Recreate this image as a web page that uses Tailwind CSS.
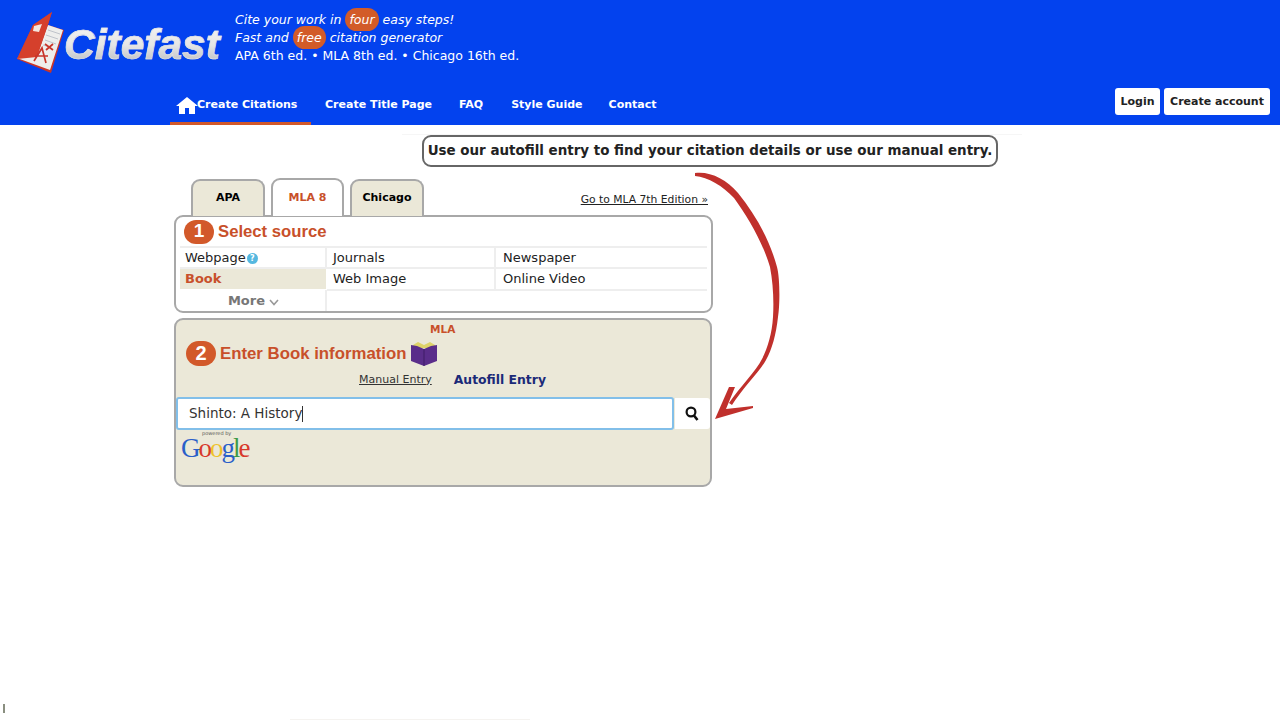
<!DOCTYPE html>
<html lang="en">
<head>
<meta charset="utf-8">
<script src="https://cdn.jsdelivr.net/npm/@tailwindcss/browser@4"></script>
<title>Citefast</title>
</head>
<body class="bg-white font-['DejaVu_Sans',sans-serif] overflow-hidden">
<div class="relative w-[1280px] h-[720px] overflow-hidden">
  <header class="h-[125px] bg-[#0342ee] flex flex-col">
    <div class="h-[83px] flex pl-[15px] pt-[9px]">
      <svg class="w-[50px] h-[64px] shrink-0" viewBox="0 0 50 64">
        <path d="M2 50 L18 16 L37 3 L33 16 L49 21 L36 64 Z" fill="#c9352a"/>
        <path d="M33 16 L48 21 L35 61 L2 49 L22 47 Z" fill="#eeeeec"/>
        <path d="M2 50 L18 16 L37 3 L32 18 L22 48 Z" fill="#d5402c"/>
        <path d="M19 17 L27 15 L24 23 L18 22 Z" fill="#f3e6df"/>
        <path d="M33 21 L45 25 M31 26 L43 30 M30 31 L41 35 M28 36 L35 38" stroke="#bfc3ca" stroke-width="1" fill="none"/>
        <path d="M19 52 L27 39 L31 54 M20 47 L33 47 M30 35 L38 41 M38 35 L31 41" stroke="#c9352a" stroke-width="1.7" fill="none"/>
      </svg>
      <div class="ml-[-1px] mt-[11px] w-[160px] h-[50px] text-[42.5px] leading-[50px] font-bold italic font-['Liberation_Sans',sans-serif] text-transparent bg-clip-text bg-gradient-to-b from-[#f6f6f6] via-[#e6e6e6] to-[#aeb2b8] [-webkit-text-stroke:0.6px_#e4e4e4] whitespace-nowrap">Citefast</div>
      <div class="ml-[11px] mt-[2px] text-[12.5px] leading-[18px] text-white whitespace-nowrap">
        <p class="italic">Cite your work in <span class="inline-block px-[4px] rounded-[12px] bg-[#d25b28] leading-[23px] h-[23px] -my-[3px]">four</span> easy steps!</p>
        <p class="italic">Fast and <span class="inline-block px-[4px] rounded-[12px] bg-[#d25b28] leading-[23px] h-[23px] -my-[3px]">free</span> citation generator</p>
        <p>APA 6th ed. • MLA 8th ed. • Chicago 16th ed.</p>
      </div>
    </div>
    <div class="flex-1 flex justify-between pl-[170px] pr-[10px]">
      <nav class="flex items-stretch text-[11px] font-bold text-white">
        <a class="flex items-center w-[141px] pl-[6px] pt-[5px] border-b-[3px] border-[#d2592a]">
          <svg class="w-[22px] h-[18px] shrink-0" viewBox="0 0 22 18"><path d="M11 1 L22 10 H19 V18 H13 V12 H9 V18 H3 V10 H0 Z" fill="#fff"/></svg>
          <span class="ml-[-1px]">Create Citations</span>
        </a>
        <a class="flex items-center ml-[14px] pt-[3px]">Create Title Page</a>
        <a class="flex items-center ml-[27px] pt-[3px]">FAQ</a>
        <a class="flex items-center ml-[28px] pt-[3px]">Style Guide</a>
        <a class="flex items-center ml-[26px] pt-[3px]">Contact</a>
      </nav>
      <div class="flex gap-[4px] mt-[5px] h-[27px] pt-0 text-[11px] font-bold text-[#222]">
        <a class="flex items-center justify-center w-[45px] pt-[1px] bg-white rounded-[3px]">Login</a>
        <a class="flex items-center justify-center w-[106px] pt-[1px] bg-white rounded-[3px]">Create account</a>
      </div>
    </div>
  </header>

  <main class="w-[539px] ml-[174px] pt-[54px]">
    <div class="flex items-end h-[37px] pl-[17px] relative z-10 -mb-px">
      <div class="w-[74px] h-[37px] flex items-center justify-center border-2 border-b-0 border-[#a8a8a8] rounded-t-[9px] bg-[#ebe8d8] text-[11px] font-bold text-black">APA</div>
      <div class="w-[73px] h-[38px] ml-[6px] flex items-center justify-center border-2 border-b-0 border-[#a8a8a8] rounded-t-[9px] bg-white text-[11px] font-bold text-[#c8502a]">MLA 8</div>
      <div class="w-[74px] h-[37px] ml-[6px] flex items-center justify-center border-2 border-b-0 border-[#a8a8a8] rounded-t-[9px] bg-[#ebe8d8] text-[11px] font-bold text-black">Chicago</div>
      <a class="ml-auto mr-[5px] mb-[9px] text-[10.75px] leading-[14px] text-[#222] underline">Go to MLA 7th Edition »</a>
    </div>

    <section class="w-[539px] h-[98px] border-2 border-[#a8a8a8] rounded-[9px] bg-white px-[4px]">
      <div class="h-[29px] flex items-center pl-[4px] font-['Liberation_Sans',sans-serif] font-bold text-[16.7px] text-[#c8502a]">
        <span class="w-[30px] h-[24px] rounded-[12px] bg-[#d2592a] text-white text-[19px] flex items-center justify-center">1</span>
        <span class="ml-[4px] mt-[1px]">Select source</span>
      </div>
      <div class="grid grid-cols-[147px_169px_211px] w-[527px] grid-rows-[21px_22px_20px] text-[13px] text-[#222] border-t-2 border-[#eeeeee]">
        <div class="flex items-center pl-[5px] border-r-2 border-b-2 border-[#eeeeee]">Webpage<span class="ml-[1px] mt-[2px] w-[11px] h-[11px] rounded-full bg-[#55b8e0] text-white text-[8px] leading-[11px] font-bold text-center">?</span></div>
        <div class="flex items-center pl-[6px] border-r-2 border-b-2 border-[#eeeeee]">Journals</div>
        <div class="flex items-center pl-[7px] border-b-2 border-[#eeeeee]">Newspaper</div>
        <div class="flex items-center pl-[5px] mr-[1px] bg-[#ebe8d8] font-bold text-[#c8502a] border-b-2 border-white shadow-[1px_0_0_#fff]">Book</div>
        <div class="flex items-center pl-[6px] border-r-2 border-b-2 border-[#eeeeee]">Web Image</div>
        <div class="flex items-center pl-[7px] border-b-2 border-[#eeeeee]">Online Video</div>
        <div class="flex items-center justify-center pl-[2px] border-r-2 border-[#eeeeee] font-bold text-[#777] -mt-[1px]">More
          <svg class="ml-[4px] mt-[3px] w-[10px] h-[7px]" viewBox="0 0 10 7"><path d="M1 1 L5 5.5 L9 1" stroke="#999" stroke-width="1.6" fill="none"/></svg>
        </div>
        <div></div>
        <div></div>
      </div>
    </section>

    <section class="w-[538px] h-[169px] mt-[5px] border-2 border-[#a8a8a8] rounded-[9px] bg-[#ebe8d8] flex flex-col">
      <p class="h-[18px] pt-[2px] pl-[254px] text-[10.5px] leading-[14px] font-bold text-[#c8502a]">MLA</p>
      <div class="h-[28px] mt-[1px] flex items-center pl-[10px] font-['Liberation_Sans',sans-serif] font-bold text-[16.8px] text-[#c8502a]">
        <span class="w-[30px] h-[25px] rounded-[13px] bg-[#d2592a] text-white text-[20px] flex items-center justify-center">2</span>
        <span class="ml-[4px] mt-[1px]">Enter Book information</span>
        <svg class="ml-[5px] w-[26px] h-[25px]" viewBox="0 0 26 25">
          <path d="M2 4 L7 1 L13 4 L19 1 L24 4 L24 7 L2 7 Z" fill="#ded36a"/>
          <path d="M0 4 L6 5 L13 8 L20 5 L26 4 V20 L13 25 L0 20 Z" fill="#5a2d8a"/>
          <path d="M13 8 V25" stroke="#3f1d66" stroke-width="1"/>
        </svg>
      </div>
      <div class="h-[20px] mt-[3px] flex items-center pl-[183px]">
        <a class="text-[11px] text-[#333] underline">Manual Entry</a>
        <span class="ml-[22px] text-[12.4px] font-bold text-[#1b2a78]">Autofill Entry</span>
      </div>
      <div class="flex mt-[7px]">
        <div class="w-[498px] h-[33px] bg-white border-2 border-[#82bfe9] rounded-[3px] flex items-center pl-[11px] text-[13.5px] text-[#333]">Shinto: A History<span class="w-px h-[16px] bg-[#333]"></span></div>
        <div class="w-[35px] h-[31px] mt-[1px] ml-px bg-white rounded-r-[3px] flex items-center justify-center pr-[2px]">
          <svg class="w-[14px] h-[15px]" viewBox="0 0 14 15"><circle cx="6" cy="6" r="4.4" fill="none" stroke="#111" stroke-width="2.2"/><path d="M9 9.5 L12.5 14" stroke="#111" stroke-width="2.6"/></svg>
        </div>
      </div>
      <div class="pl-[5px] flex flex-col w-[80px]">
        <span class="pl-[21px] text-[5px] leading-[6px] h-[6px] text-[#555]">powered by</span>
        <span class="font-['Liberation_Serif',serif] text-[27px] leading-[24px] tracking-[-2px] whitespace-nowrap"><span class="inline-block text-[#2a5fc9]">G</span><span class="inline-block text-[#d8392b]">o</span><span class="inline-block text-[#eec22b]">o</span><span class="inline-block text-[#2a5fc9]">g</span><span class="inline-block text-[#3d9a45]">l</span><span class="inline-block text-[#d8392b]">e</span></span>
      </div>
    </section>
  </main>

  <div class="absolute left-[402px] top-[134px] w-[620px] h-px bg-[#f6f6f6]"></div>
  <div class="absolute left-[422px] top-[135px] w-[576px] h-[32px] pt-[1px] border-2 border-[#666] rounded-[9px] bg-white flex items-center justify-center text-[13.45px] font-bold text-[#222] whitespace-nowrap">Use our autofill entry to find your citation details or use our manual entry.</div>

  <svg class="absolute left-[690px] top-[165px] w-[100px] h-[260px]" viewBox="0 0 100 260">
    <path d="M5 8 C20 6 36 14 48 28 C66 50 80 76 87 102 C90 113 90 140 88 152 C86 170 82 184 76 195 C70 206 52 224 42 240 L39 238 C50 222 66 206 72 194 C78 182 82 168 83 152 C84 135 83 118 80 102 C73 78 58 52 44 33 C33 21 18 12 5 11 Z" fill="#c0302c"/>
    <path d="M39 222 L45 222 L36 244 L63 241 L63 243 L25 254 Z" fill="#c0302c"/>
  </svg>
  <div class="absolute left-[290px] top-[719px] w-[240px] h-px bg-[#f5f3f0]"></div>
  <div class="absolute left-[3px] top-[704px] w-[2px] h-[9px] bg-[#8a8f80]"></div>
</div>
</body>
</html>
